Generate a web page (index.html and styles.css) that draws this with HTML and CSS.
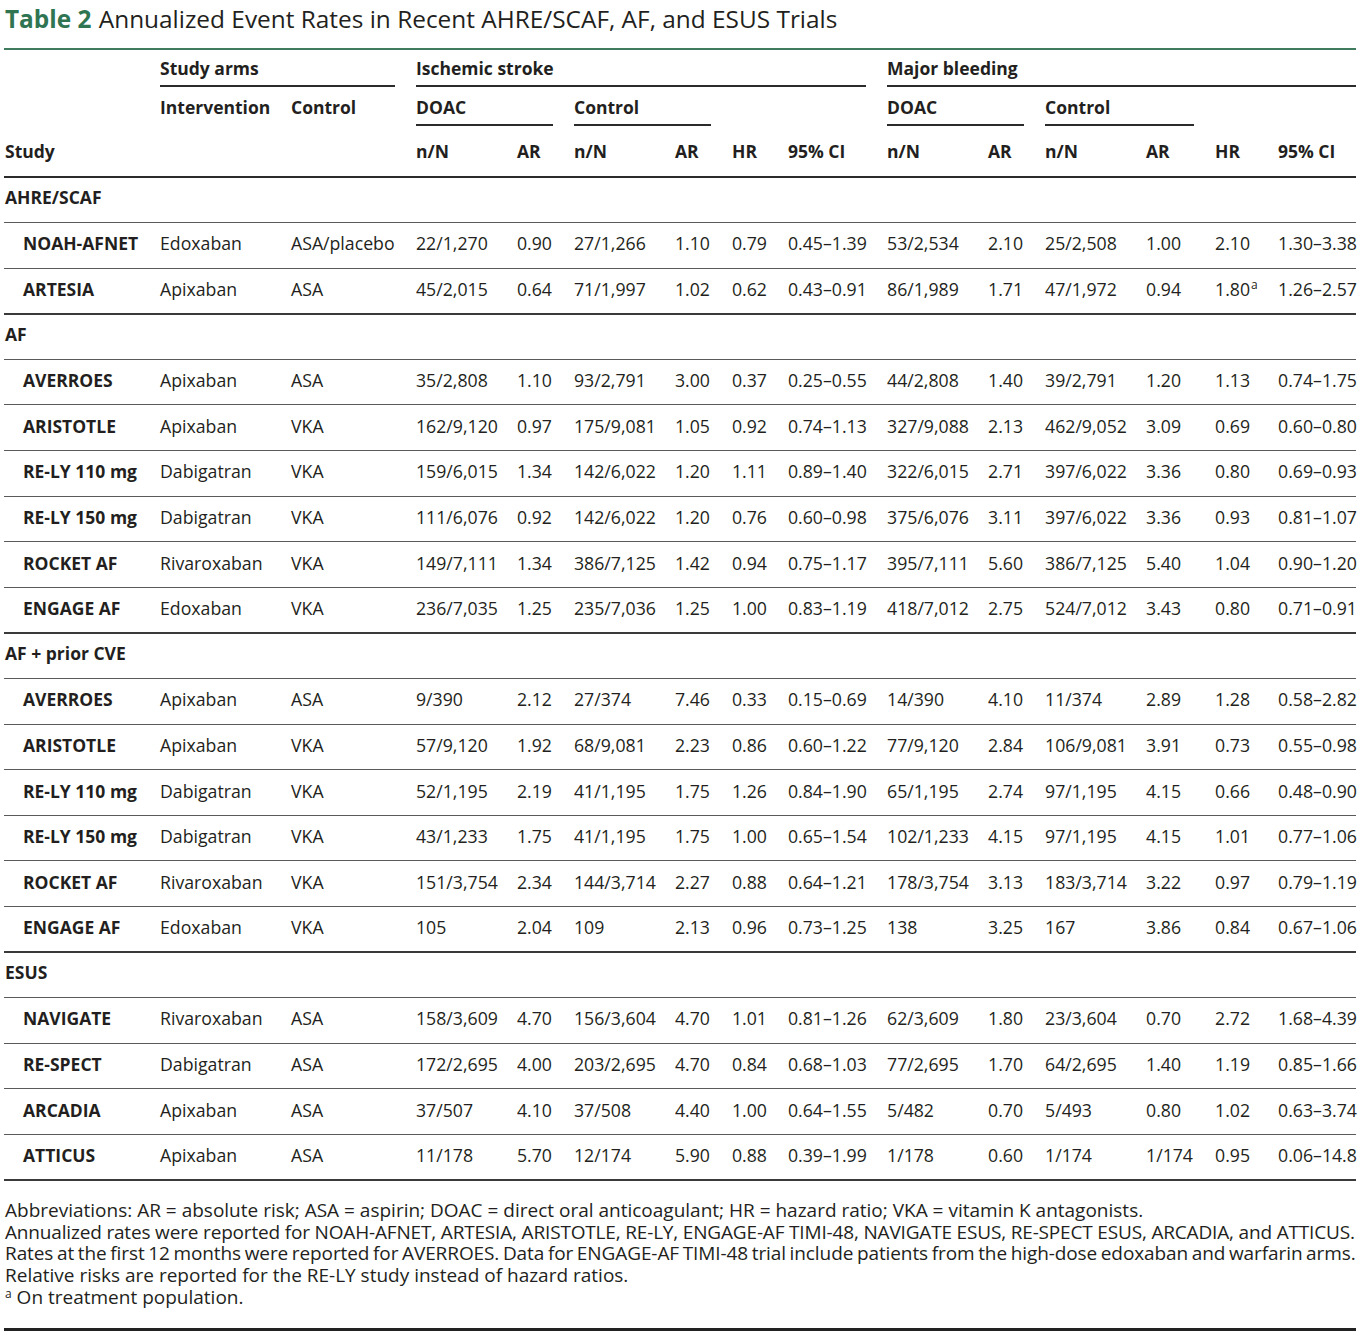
FILE: index.html
```html
<!DOCTYPE html>
<html>
<head>
<meta charset="utf-8">
<link rel="stylesheet" href="styles.css">
</head>
<body>
<div class="page">
  <h1 class="title"><span class="label">Table 2</span> Annualized Event Rates in Recent AHRE/SCAF, AF, and ESUS Trials</h1>
  <table class="tbl">
    <colgroup>
      <col style="width:156px"><col style="width:131px"><col style="width:125px">
      <col style="width:101px"><col style="width:57px"><col style="width:101px"><col style="width:57px"><col style="width:56px"><col style="width:99px">
      <col style="width:101px"><col style="width:57px"><col style="width:101px"><col style="width:69px"><col style="width:63px"><col style="width:78px">
    </colgroup>
    <thead>
      <tr class="h1">
        <th></th>
        <th colspan="2"><div class="ul">Study arms</div></th>
        <th colspan="6"><div class="ul">Ischemic stroke</div></th>
        <th colspan="6" class="last"><div class="ul">Major bleeding</div></th>
      </tr>
      <tr class="h2">
        <th></th>
        <th><div class="nl">Intervention</div></th>
        <th><div class="nl">Control</div></th>
        <th colspan="2"><div class="ul">DOAC</div></th>
        <th colspan="2"><div class="ul">Control</div></th>
        <th colspan="2"></th>
        <th colspan="2"><div class="ul">DOAC</div></th>
        <th colspan="2"><div class="ul">Control</div></th>
        <th colspan="2"></th>
      </tr>
      <tr class="h3">
        <th class="first">Study</th>
        <th></th><th></th>
        <th>n/N</th><th>AR</th><th>n/N</th><th>AR</th><th>HR</th><th>95% CI</th>
        <th>n/N</th><th>AR</th><th>n/N</th><th>AR</th><th>HR</th><th class="last">95% CI</th>
      </tr>
    </thead>
    <tbody>
      <tr class="grp"><td colspan="15">AHRE/SCAF</td></tr>
      <tr><td class="st">NOAH-AFNET</td><td>Edoxaban</td><td>ASA/placebo</td><td>22/1,270</td><td>0.90</td><td>27/1,266</td><td>1.10</td><td>0.79</td><td>0.45–1.39</td><td>53/2,534</td><td>2.10</td><td>25/2,508</td><td>1.00</td><td>2.10</td><td class="last">1.30–3.38</td></tr>
      <tr class="end"><td class="st">ARTESIA</td><td>Apixaban</td><td>ASA</td><td>45/2,015</td><td>0.64</td><td>71/1,997</td><td>1.02</td><td>0.62</td><td>0.43–0.91</td><td>86/1,989</td><td>1.71</td><td>47/1,972</td><td>0.94</td><td>1.80<sup>a</sup></td><td class="last">1.26–2.57</td></tr>
      <tr class="grp"><td colspan="15">AF</td></tr>
      <tr><td class="st">AVERROES</td><td>Apixaban</td><td>ASA</td><td>35/2,808</td><td>1.10</td><td>93/2,791</td><td>3.00</td><td>0.37</td><td>0.25–0.55</td><td>44/2,808</td><td>1.40</td><td>39/2,791</td><td>1.20</td><td>1.13</td><td class="last">0.74–1.75</td></tr>
      <tr><td class="st">ARISTOTLE</td><td>Apixaban</td><td>VKA</td><td>162/9,120</td><td>0.97</td><td>175/9,081</td><td>1.05</td><td>0.92</td><td>0.74–1.13</td><td>327/9,088</td><td>2.13</td><td>462/9,052</td><td>3.09</td><td>0.69</td><td class="last">0.60–0.80</td></tr>
      <tr><td class="st">RE-LY 110 mg</td><td>Dabigatran</td><td>VKA</td><td>159/6,015</td><td>1.34</td><td>142/6,022</td><td>1.20</td><td>1.11</td><td>0.89–1.40</td><td>322/6,015</td><td>2.71</td><td>397/6,022</td><td>3.36</td><td>0.80</td><td class="last">0.69–0.93</td></tr>
      <tr><td class="st">RE-LY 150 mg</td><td>Dabigatran</td><td>VKA</td><td>111/6,076</td><td>0.92</td><td>142/6,022</td><td>1.20</td><td>0.76</td><td>0.60–0.98</td><td>375/6,076</td><td>3.11</td><td>397/6,022</td><td>3.36</td><td>0.93</td><td class="last">0.81–1.07</td></tr>
      <tr><td class="st">ROCKET AF</td><td>Rivaroxaban</td><td>VKA</td><td>149/7,111</td><td>1.34</td><td>386/7,125</td><td>1.42</td><td>0.94</td><td>0.75–1.17</td><td>395/7,111</td><td>5.60</td><td>386/7,125</td><td>5.40</td><td>1.04</td><td class="last">0.90–1.20</td></tr>
      <tr class="end"><td class="st">ENGAGE AF</td><td>Edoxaban</td><td>VKA</td><td>236/7,035</td><td>1.25</td><td>235/7,036</td><td>1.25</td><td>1.00</td><td>0.83–1.19</td><td>418/7,012</td><td>2.75</td><td>524/7,012</td><td>3.43</td><td>0.80</td><td class="last">0.71–0.91</td></tr>
      <tr class="grp"><td colspan="15">AF + prior CVE</td></tr>
      <tr><td class="st">AVERROES</td><td>Apixaban</td><td>ASA</td><td>9/390</td><td>2.12</td><td>27/374</td><td>7.46</td><td>0.33</td><td>0.15–0.69</td><td>14/390</td><td>4.10</td><td>11/374</td><td>2.89</td><td>1.28</td><td class="last">0.58–2.82</td></tr>
      <tr><td class="st">ARISTOTLE</td><td>Apixaban</td><td>VKA</td><td>57/9,120</td><td>1.92</td><td>68/9,081</td><td>2.23</td><td>0.86</td><td>0.60–1.22</td><td>77/9,120</td><td>2.84</td><td>106/9,081</td><td>3.91</td><td>0.73</td><td class="last">0.55–0.98</td></tr>
      <tr><td class="st">RE-LY 110 mg</td><td>Dabigatran</td><td>VKA</td><td>52/1,195</td><td>2.19</td><td>41/1,195</td><td>1.75</td><td>1.26</td><td>0.84–1.90</td><td>65/1,195</td><td>2.74</td><td>97/1,195</td><td>4.15</td><td>0.66</td><td class="last">0.48–0.90</td></tr>
      <tr><td class="st">RE-LY 150 mg</td><td>Dabigatran</td><td>VKA</td><td>43/1,233</td><td>1.75</td><td>41/1,195</td><td>1.75</td><td>1.00</td><td>0.65–1.54</td><td>102/1,233</td><td>4.15</td><td>97/1,195</td><td>4.15</td><td>1.01</td><td class="last">0.77–1.06</td></tr>
      <tr><td class="st">ROCKET AF</td><td>Rivaroxaban</td><td>VKA</td><td>151/3,754</td><td>2.34</td><td>144/3,714</td><td>2.27</td><td>0.88</td><td>0.64–1.21</td><td>178/3,754</td><td>3.13</td><td>183/3,714</td><td>3.22</td><td>0.97</td><td class="last">0.79–1.19</td></tr>
      <tr class="end"><td class="st">ENGAGE AF</td><td>Edoxaban</td><td>VKA</td><td>105</td><td>2.04</td><td>109</td><td>2.13</td><td>0.96</td><td>0.73–1.25</td><td>138</td><td>3.25</td><td>167</td><td>3.86</td><td>0.84</td><td class="last">0.67–1.06</td></tr>
      <tr class="grp"><td colspan="15">ESUS</td></tr>
      <tr><td class="st">NAVIGATE</td><td>Rivaroxaban</td><td>ASA</td><td>158/3,609</td><td>4.70</td><td>156/3,604</td><td>4.70</td><td>1.01</td><td>0.81–1.26</td><td>62/3,609</td><td>1.80</td><td>23/3,604</td><td>0.70</td><td>2.72</td><td class="last">1.68–4.39</td></tr>
      <tr><td class="st">RE-SPECT</td><td>Dabigatran</td><td>ASA</td><td>172/2,695</td><td>4.00</td><td>203/2,695</td><td>4.70</td><td>0.84</td><td>0.68–1.03</td><td>77/2,695</td><td>1.70</td><td>64/2,695</td><td>1.40</td><td>1.19</td><td class="last">0.85–1.66</td></tr>
      <tr><td class="st">ARCADIA</td><td>Apixaban</td><td>ASA</td><td>37/507</td><td>4.10</td><td>37/508</td><td>4.40</td><td>1.00</td><td>0.64–1.55</td><td>5/482</td><td>0.70</td><td>5/493</td><td>0.80</td><td>1.02</td><td class="last">0.63–3.74</td></tr>
      <tr class="end"><td class="st">ATTICUS</td><td>Apixaban</td><td>ASA</td><td>11/178</td><td>5.70</td><td>12/174</td><td>5.90</td><td>0.88</td><td>0.39–1.99</td><td>1/178</td><td>0.60</td><td>1/174</td><td>1/174</td><td>0.95</td><td class="last">0.06–14.8</td></tr>
    </tbody>
  </table>
  <div class="notes">
    <p class="n1">Abbreviations: AR = absolute risk; ASA = aspirin; DOAC = direct oral anticoagulant; HR = hazard ratio; VKA = vitamin K antagonists.</p>
    <p class="n2">Annualized rates were reported for NOAH-AFNET, ARTESIA, ARISTOTLE, RE-LY, ENGAGE-AF TIMI-48, NAVIGATE ESUS, RE-SPECT ESUS, ARCADIA, and ATTICUS.</p>
    <p class="n3">Rates at the first 12 months were reported for AVERROES. Data for ENGAGE-AF TIMI-48 trial include patients from the high-dose edoxaban and warfarin arms.</p>
    <p class="n4">Relative risks are reported for the RE-LY study instead of hazard ratios.</p>
    <p class="n5"><sup>a</sup> On treatment population.</p>
  </div>
</div>
</body>
</html>
```

FILE: styles.css
```css
* { box-sizing: border-box; }
html, body { margin: 0; padding: 0; background: #fff; }
body {
  font-family: "Open Sans", "Noto Sans", sans-serif;
  color: #231f20;
}
.page {
  width: 1366px;
  padding: 0 10px 0 4px;
}
.title {
  margin: 0;
  padding: 4px 0 0 1px;
  height: 50px;
  font-size: 24.4px;
  font-weight: 400;
  line-height: 30px;
  color: #231f20;
  border-bottom: 2px solid #3f7b5d;
}
.title .label {
  font-weight: 700;
  color: #2f7552;
  margin-right: 1px;
}
.tbl {
  width: 1352px;
  table-layout: fixed;
  border-collapse: collapse;
  font-size: 17.7px;
}
.tbl th, .tbl td {
  padding: 0 21px 0 0;
  text-align: left;
  white-space: nowrap;
}
.tbl th {
  font-weight: 700;
  font-size: 17.5px;
  line-height: 24px;
  vertical-align: bottom;
}
.tbl .last { padding-right: 0; }
.tbl .ul {
  border-bottom: 2px solid #2b2b2b;
  padding-bottom: 5px;
}
.tbl .nl { padding-bottom: 7px; }
.tbl tr.h1 th { padding-top: 6px; }
.tbl tr.h1 th:first-child { height: 37px; }
.tbl tr.h2 th { padding-top: 8px; }
.tbl tr.h2 th:first-child { height: 39px; }
.tbl tr.h3 th { padding-top: 13px; padding-bottom: 13px; border-bottom: 2px solid #2b2b2b; }
.tbl tr.h3 th.first { padding-left: 1px; }
.tbl td {
  height: 45.6px;
  line-height: 24px;
  vertical-align: middle;
  padding-bottom: 4px;
  border-bottom: 1px solid #5a5a5a;
}
.tbl tr.end td { border-bottom: 2px solid #3a3a3a; }
.tbl tr.grp td {
  font-weight: 700;
  font-size: 17.5px;
  padding-left: 1px;
  padding-bottom: 6px;
}
.tbl td.st {
  font-weight: 700;
  font-size: 17.5px;
  padding-left: 19px;
}
.tbl sup {
  font-size: 12px;
  line-height: 0;
  vertical-align: 7px;
  margin-left: 1px;
}
.notes {
  padding: 19px 0 19px 1px;
  border-bottom: 3px solid #222;
  font-size: 19px;
  line-height: 21.7px;
}
.notes p {
  margin: 0;
  white-space: nowrap;
}
.notes .n2 { letter-spacing: -0.17px; }
.notes .n3 { letter-spacing: -0.09px; word-spacing: -1.2px; }
.notes sup {
  font-size: 12px;
  vertical-align: 6px;
  line-height: 0;
}
```
